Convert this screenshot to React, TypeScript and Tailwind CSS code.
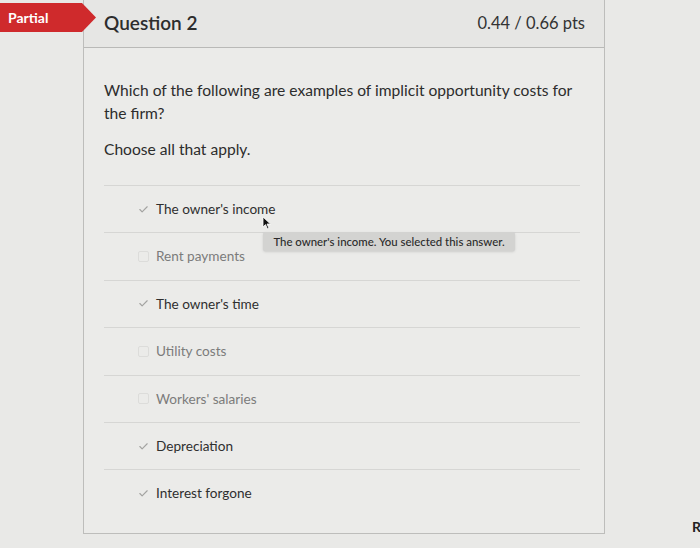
import { Check } from 'lucide-react';

type Answer = {
  label: string;
  selected: boolean;
};

const answers: Answer[] = [
  { label: "The owner's income", selected: true },
  { label: 'Rent payments', selected: false },
  { label: "The owner's time", selected: true },
  { label: 'Utility costs', selected: false },
  { label: "Workers' salaries", selected: false },
  { label: 'Depreciation', selected: true },
  { label: 'Interest forgone', selected: true },
];

function AnswerRow({ answer }: { answer: Answer }) {
  return (
    <div className="flex h-[47.4px] items-center border-t border-[#d6d6d4] pl-[33px]">
      <span className="flex w-[13px] items-center justify-center">
        {answer.selected ? (
          <Check className="h-[11px] w-[11px] text-[#a3a3a1]" strokeWidth={2.5} />
        ) : (
          <span className="h-[11px] w-[11px] rounded-[2px] border border-[#dcdcda]" />
        )}
      </span>
      <span
        className={`ml-[6px] text-[13.6px] ${answer.selected ? 'text-[#2f2f2f]' : 'text-[#7b7b7b]'}`}
      >
        {answer.label}
      </span>
    </div>
  );
}

export default function App() {
  return (
    <div
      className="relative h-[548px] w-[700px] overflow-hidden bg-[#e9e9e7]"
      style={{ fontFamily: 'Lato, "Open Sans", sans-serif' }}
    >
      <div className="ml-[83px] w-[522px] border-x border-b border-[#bdbdbb] bg-[#ebebe9]">
        <div className="flex h-[48px] items-center justify-between border-b border-[#b9b9b7] bg-[#e6e6e4] pl-[20px] pr-[19px]">
          <h2 className="text-[19px] font-semibold text-[#2d2d2d]">Question 2</h2>
          <span className="text-[16.5px] text-[#333]">0.44 / 0.66 pts</span>
        </div>

        <div className="pl-[20px] pr-[24px] pt-[31px] pb-[16px]">
          <p className="w-[480px] text-[15.6px] leading-[23px] text-[#2d2d2d]">
            Which of the following are examples of implicit opportunity costs for the firm?
          </p>
          <p className="mt-[13px] text-[15.6px] leading-[23px] text-[#2d2d2d]">Choose all that apply.</p>

          <div className="mt-[24px]">
            {answers.map((a) => (
              <AnswerRow key={a.label} answer={a} />
            ))}
          </div>
        </div>
      </div>

      {/* grade badge */}
      <div className="absolute left-0 top-[3px] flex h-[29px] w-[96px] items-center pl-[8px] text-[14px] font-bold text-white">
        <svg className="absolute inset-0" width="96" height="29" viewBox="0 0 96 29">
          <path d="M0 0 H82 L96 14.5 L82 29 H0 Z" fill="#cf2a2c" />
        </svg>
        <span className="relative">Partial</span>
      </div>

      {/* tooltip */}
      <div className="absolute left-[263px] top-[232px] flex h-[19px] w-[252px] items-center justify-center rounded-[2px] bg-[#d3d3d1] text-[11.4px] font-medium text-[#2b2b2b] shadow-sm">
        The owner's income. You selected this answer.
      </div>

      {/* mouse pointer */}
      <svg className="absolute left-[262px] top-[216px]" width="10" height="14" viewBox="0 0 10 14">
        <path d="M1 1 L1 11 L3.5 8.6 L5.5 13 L7 12.3 L5 8 L8.5 8 Z" fill="#111" stroke="#fff" strokeWidth="0.8" />
      </svg>

      <span className="absolute left-[692px] top-[516px] text-[14px] font-bold text-[#222]">R</span>
    </div>
  );
}
